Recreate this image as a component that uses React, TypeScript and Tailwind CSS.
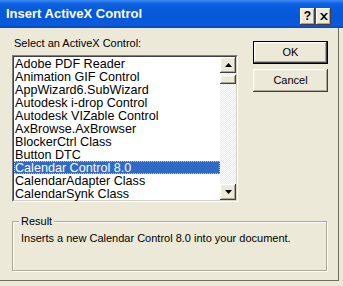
import type { JSX } from 'react';

const ITEMS = [
  'Adobe PDF Reader',
  'Animation GIF Control',
  'AppWizard6.SubWizard',
  'Autodesk i-drop Control',
  'Autodesk VIZable Control',
  'AxBrowse.AxBrowser',
  'BlockerCtrl Class',
  'Button DTC',
  'Calendar Control 8.0',
  'CalendarAdapter Class',
  'CalendarSynk Class',
];

const SELECTED = 'Calendar Control 8.0';

// classic raised 3D edge
const raised =
  'bg-[#ece9d8] shadow-[inset_-1px_-1px_0_#404040,inset_1px_1px_0_#fff,inset_-2px_-2px_0_#aca899,inset_2px_2px_0_#f1efe2]';

function Arrow({ up }: { up: boolean }): JSX.Element {
  return (
    <div className={`w-[16px] h-[16px] flex items-center justify-center ${raised}`}>
      <svg width="7" height="4" viewBox="0 0 7 4">
        {up ? <path d="M3.5 0L7 4H0z" fill="#000" /> : <path d="M0 0h7L3.5 4z" fill="#000" />}
      </svg>
    </div>
  );
}

function ScrollBar(): JSX.Element {
  return (
    <div className="w-[16px] h-full flex flex-col bg-[image:repeating-conic-gradient(#fff_0_25%,#ece9d8_0_50%)] bg-[length:2px_2px]">
      <Arrow up />
      <div className={`w-[16px] h-[9px] mt-[2px] ${raised}`} />
      <div className="flex-1" />
      <Arrow up={false} />
    </div>
  );
}

function ListBox(): JSX.Element {
  return (
    <div className="w-[226px] h-[147px] border border-t-[#808080] border-l-[#808080] border-r-white border-b-white">
      <div className="w-full h-full border border-t-[#404040] border-l-[#404040] border-r-[#d4d0c8] border-b-[#d4d0c8] bg-white flex">
        <div className="flex-1 flex flex-col text-[12.6px]">
          {ITEMS.map((item) => {
            const sel = item === SELECTED;
            return (
              <div
                key={item}
                className={`h-[13px] leading-[12px] whitespace-nowrap border ${
                  sel
                    ? 'bg-[#316ac5] text-white border-dotted border-[#e4c27c]'
                    : 'border-transparent'
                }`}
              >
                {item}
              </div>
            );
          })}
        </div>
        <ScrollBar />
      </div>
    </div>
  );
}

function Button({ label, isDefault }: { label: string; isDefault?: boolean }): JSX.Element {
  return (
    <div
      className={`w-[75px] h-[23px] flex items-center justify-center text-[11px] ${
        isDefault ? 'border border-black' : ''
      } ${raised}`}
    >
      {label}
    </div>
  );
}

function CaptionButton({ children }: { children: JSX.Element | string }): JSX.Element {
  return (
    <div
      className={`w-[15px] h-[17px] flex items-center justify-center text-[12px] font-bold leading-none ${raised}`}
    >
      {children}
    </div>
  );
}

export default function App(): JSX.Element {
  return (
    <div className="w-[343px] h-[286px] bg-[#ece9d8] overflow-hidden font-['Liberation_Sans',Arial,sans-serif] text-[11px] text-black">
      {/* Title bar */}
      <div className="h-[28px] flex items-center pl-[6px] pr-[12px] bg-[linear-gradient(180deg,#3d8bf5_0%,#0b5fe0_14%,#0656d8_60%,#0a5cdd_88%,#0649c2_100%)]">
        <span className="flex-1 text-white text-[13px] font-bold pb-[1px]">
          Insert ActiveX Control
        </span>
        <div className="flex gap-[1px] mt-[4px]">
          <CaptionButton>?</CaptionButton>
          <CaptionButton>
            <svg width="8" height="7" viewBox="0 0 8 7">
              <path d="M0 0h2l2 2.3L6 0h2L5 3.5 8 7H6L4 4.7 2 7H0l3-3.5z" fill="#000" />
            </svg>
          </CaptionButton>
        </div>
      </div>

      {/* Body */}
      <div className="w-[339px] h-[253px] border-r border-b border-[#716f64] pl-[12px]">
        <div className="flex gap-[15px]">
          <div className="flex flex-col">
            <div className="pt-[9px] pl-[2px] h-[22px] leading-[13px]">Select an ActiveX Control:</div>
            <div className="mt-[5px]">
              <ListBox />
            </div>
          </div>
          <div className="flex flex-col gap-[5px] pt-[13px]">
            <Button label="OK" isDefault />
            <Button label="Cancel" />
          </div>
        </div>

        {/* Result group */}
        <div className="relative mt-[19px] w-[315px] h-[50px] border border-[#aca899] shadow-[inset_1px_1px_0_#fff,1px_1px_0_#fff]">
          <span className="absolute -top-[7px] left-[6px] px-[2px] bg-[#ece9d8] leading-[13px]">Result</span>
          <div className="pt-[10px] pl-[8px] leading-[13px]">
            Inserts a new Calendar Control 8.0 into your document.
          </div>
        </div>
      </div>
    </div>
  );
}
